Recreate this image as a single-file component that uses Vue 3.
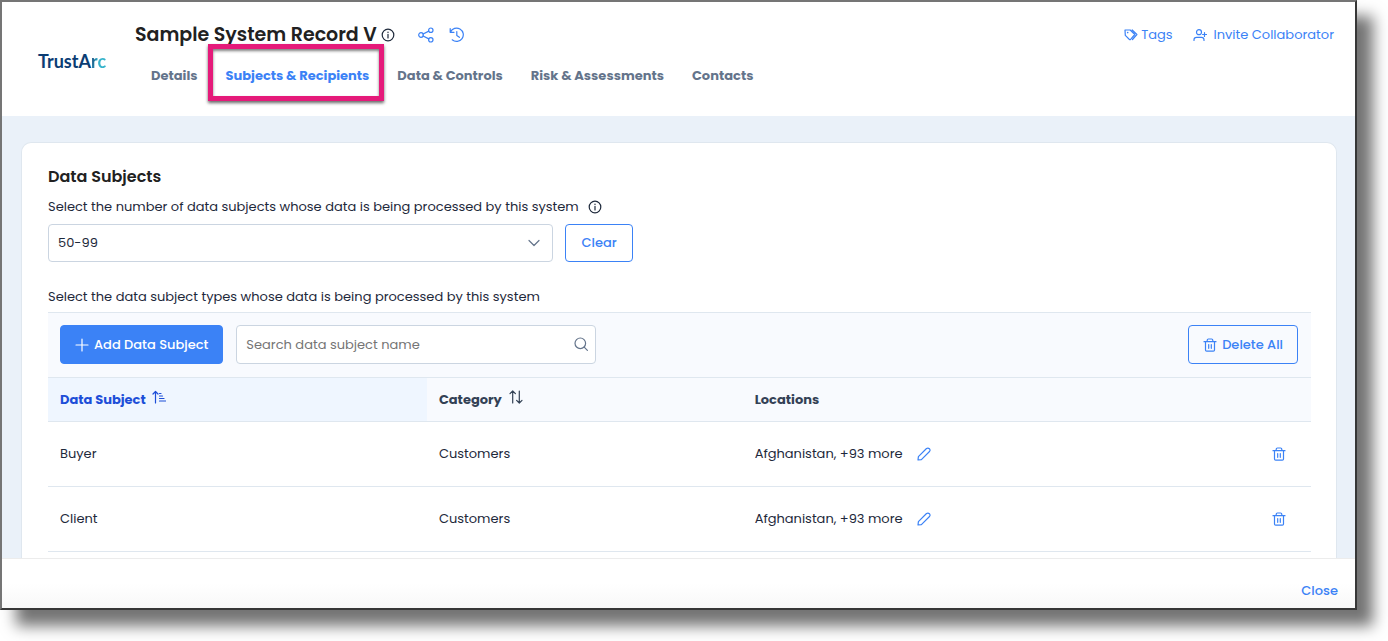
<script setup>
import { ref, computed } from 'vue'

const tabs = ['Details', 'Subjects & Recipients', 'Data & Controls', 'Risk & Assessments', 'Contacts']
const activeTab = ref('Subjects & Recipients')

const ranges = ['', '0-49', '50-99', '100-499', '500+']
const range = ref('50-99')

const query = ref('')
const subjects = ref([
  { name: 'Buyer', category: 'Customers', locations: 'Afghanistan, +93 more' },
  { name: 'Client', category: 'Customers', locations: 'Afghanistan, +93 more' },
])
const visible = computed(() =>
  subjects.value.filter((s) => s.name.toLowerCase().includes(query.value.toLowerCase()))
)
function remove(row) {
  subjects.value = subjects.value.filter((s) => s !== row)
}
</script>

<template>
  <div class="page">
    <div class="window">
      <header class="header">
        <a class="logo" href="#" aria-label="TrustArc">TrustA<span>rc</span></a>
        <div class="heading">
          <div class="title-row">
            <h1>Sample System Record V</h1>
            <button class="icon-btn dark" type="button" aria-label="Record information">
              <svg width="14" height="14" viewBox="0 0 14 14"><circle cx="7" cy="7" r="5.8" /><path d="M7 6.3v3.6M7 4v.5" /></svg>
            </button>
            <button class="icon-btn share" type="button" aria-label="Share">
              <svg width="16" height="16" viewBox="0 0 16 16"><circle cx="3" cy="8" r="2.3" /><circle cx="12.8" cy="3.2" r="2.2" /><circle cx="12.8" cy="12.8" r="2.2" /><path d="M5.1 7L10.8 4.1M5.1 9l5.7 2.9" /></svg>
            </button>
            <button class="icon-btn history" type="button" aria-label="History">
              <svg width="16" height="16" viewBox="0 0 16 16"><path d="M1.200 1.500v3.800h3.800M1.500 5A6.700 6.700 0 1 1 3.200 12.800M7.800 4.500v3.900l2.600 1.900" /></svg>
            </button>
          </div>
          <nav class="tabs">
            <button
              v-for="tab in tabs"
              :key="tab"
              type="button"
              :class="['tab', { active: tab === activeTab }]"
              @click="activeTab = tab"
            >{{ tab }}</button>
          </nav>
        </div>
        <div class="actions">
          <button class="link" type="button">
            <svg width="14" height="14" viewBox="0 0 14 14"><path d="M1 2h5.200l4.600 4.500-4 4.700q-.8.700-1.600 0L1.300 7.400zM8.200 2l4.700 4.500-4.400 5" /><circle class="dot" cx="3.700" cy="4.600" r=".8" /></svg>
            Tags
          </button>
          <button class="link invite" type="button">
            <svg width="14" height="14" viewBox="0 0 14 14"><circle cx="6" cy="4.200" r="2.500" /><path d="M1 12.500v-.7c0-1.700 1-2.500 2.500-2.500h5c1.500 0 2.500.8 2.500 2.500v.7M11.500 4.500v4M9.600 6.500h4" /></svg>
            Invite Collaborator
          </button>
        </div>
      </header>

      <main class="content">
        <section class="card">
          <h2>Data Subjects</h2>
          <div class="label-row">
            <label for="count">Select the number of data subjects whose data is being processed by this system</label>
            <button class="icon-btn dark" type="button" aria-label="About the number of data subjects">
              <svg width="14" height="14" viewBox="0 0 14 14"><circle cx="7" cy="7" r="5.8" /><path d="M7 6.3v3.6M7 4v.5" /></svg>
            </button>
          </div>
          <div class="count-row">
            <div class="select">
              <select id="count" v-model="range">
                <option v-for="r in ranges" :key="r" :value="r">{{ r }}</option>
              </select>
              <svg width="14" height="14" viewBox="0 0 14 14"><path d="M2 4.500l5 5 5-5" /></svg>
            </div>
            <button class="btn outline" type="button" @click="range = ''">Clear</button>
          </div>

          <p class="caption">Select the data subject types whose data is being processed by this system</p>
          <div class="toolbar">
            <button class="btn primary" type="button">
              <svg width="14" height="14" viewBox="0 0 14 14"><path d="M7 1v12M1 7h12" /></svg>
              Add Data Subject
            </button>
            <div class="search">
              <input v-model="query" type="text" aria-label="Search data subject name" placeholder="Search data subject name" />
              <svg width="14" height="14" viewBox="0 0 14 14"><circle cx="6.300" cy="6.300" r="5.300" /><path d="M10.200 10.200l3.200 3.200" /></svg>
            </div>
            <button class="btn outline delete" type="button" @click="subjects = []">
              <svg width="14" height="14" viewBox="0 0 14 14"><path d="M1 3.700h12M2.500 3.700V12q0 1.200 1.200 1.200h6.600q1.200 0 1.200-1.200V3.700M4.200 3.700V2.200q0-1.200 1.200-1.200h3.200q1.200 0 1.200 1.200v1.500M5.700 6.600v3.700M8.300 6.600v3.700" /></svg>
              Delete All
            </button>
          </div>

          <table>
            <thead>
              <tr>
                <th class="sorted" scope="col">
                  Data Subject
                  <svg width="14" height="14" viewBox="0 0 14 14"><path d="M3.500 13V1.500M1 4l2.500-2.500L6 4M7.500 3.500h1.500M7.500 6h3M7.500 8.500h4.500M7.500 11h6" /></svg>
                </th>
                <th class="category" scope="col">
                  Category
                  <svg width="14" height="14" viewBox="0 0 14 14"><path d="M3.700 13V1M1 3.700L3.700 1l2.700 2.700M10.300 1v12M7.600 10.300l2.700 2.700 2.700-2.700" /></svg>
                </th>
                <th class="locations" scope="col">Locations</th>
                <th class="tools" scope="col" aria-label="Actions"></th>
              </tr>
            </thead>
            <tbody>
              <tr v-for="row in visible" :key="row.name">
                <td>{{ row.name }}</td>
                <td>{{ row.category }}</td>
                <td>
                  <div class="location">
                    {{ row.locations }}
                    <button class="icon-btn" type="button" :aria-label="'Edit locations of ' + row.name">
                      <svg width="14" height="14" viewBox="0 0 14 14"><path d="M1 13l.4-3.400 8.100-8.100q1.500-1 2.900.2 1.200 1.400.1 2.800l-8.100 8.100z" /></svg>
                    </button>
                  </div>
                </td>
                <td class="tools">
                  <button class="icon-btn" type="button" :aria-label="'Delete ' + row.name" @click="remove(row)">
                    <svg width="14" height="14" viewBox="0 0 14 14"><path d="M1 3.700h12M2.500 3.700V12q0 1.200 1.200 1.200h6.600q1.200 0 1.200-1.200V3.700M4.200 3.700V2.200q0-1.200 1.200-1.200h3.200q1.200 0 1.200 1.200v1.500M5.700 6.600v3.700M8.300 6.600v3.700" /></svg>
                  </button>
                </td>
              </tr>
            </tbody>
          </table>
        </section>
      </main>

      <footer class="footer">
        <button class="link close" type="button">Close</button>
      </footer>
    </div>
  </div>
</template>

<style>
body {
  background: #fff;
}
</style>

<style scoped>
* {
  box-sizing: border-box;
}
.page {
  height: 100vh;
  padding: 0 31px 31px 0;
  overflow: hidden;
}
.window {
  display: flex;
  flex-direction: column;
  height: 100%;
  border: 2px solid;
  border-color: #757575 #373737 #373737 #757575;
  background: #fff;
  box-shadow: 16px 16px 14px rgba(0, 0, 0, 0.55);
  color: #1e293b;
  font: 13px/20px Poppins, Inter, "Liberation Sans", sans-serif;
}
button,
input,
select {
  font: inherit;
  color: inherit;
}
button {
  display: inline-flex;
  align-items: center;
  padding: 0;
  border: 0;
  background: none;
  cursor: pointer;
  white-space: nowrap;
}
svg {
  flex: none;
  fill: none;
  stroke: currentColor;
  stroke-width: 1.2;
  stroke-linecap: round;
  stroke-linejoin: round;
}
.dot {
  fill: currentColor;
  stroke: none;
}
.header {
  display: flex;
  flex: none;
  height: 114px;
  padding: 19px 21px 0 36px;
}
.logo {
  flex: none;
  width: 97px;
  padding-top: 28px;
  color: #0b3d74;
  font: 700 18px/24px Lato, sans-serif;
  text-decoration: none;
}
.logo span {
  background: linear-gradient(100deg, #0b3d74 10%, #35b3cb 45%);
  background-clip: text;
  color: transparent;
}
.heading {
  flex: 1;
}
.title-row {
  display: flex;
  align-items: center;
  height: 28px;
}
h1 {
  margin: 0 4px 0 0;
  color: #212121;
  font-size: 19px;
  font-weight: 600;
  line-height: 28px;
  white-space: nowrap;
}
.icon-btn {
  color: #3b82f6;
}
.icon-btn.dark {
  color: #1e293b;
}
.icon-btn.share {
  margin-left: 23px;
}
.icon-btn.history {
  margin-left: 15px;
}
.tabs {
  display: flex;
  padding: 4px 0 0 2px;
}
.tab {
  position: relative;
  height: 46px;
  padding: 0 14px;
  color: #64748b;
  font-weight: 700;
}
.tab.active {
  color: #3b82f6;
}
.tab.active::after {
  content: "";
  position: absolute;
  inset: -9px -1px -2px -4px;
  border: 5px solid #e51a7a;
  box-shadow: 0 2px 3px rgba(0, 0, 0, 0.6), inset 0 2px 3px rgba(0, 0, 0, 0.5);
}
.actions {
  display: flex;
  gap: 20px;
  height: 28px;
}
.link {
  gap: 3px;
  color: #3b82f6;
}
.link.invite {
  gap: 7px;
}
.content {
  display: flex;
  flex: 1;
  min-height: 0;
  padding: 26px 18px 0 19px;
  overflow: hidden;
  background: #eaf1f9;
}
.card {
  flex: 1;
  min-width: 0;
  padding: 22px 25px 0 26px;
  border: 1px solid #dfe7ef;
  border-bottom: 0;
  border-radius: 10px 10px 0 0;
  background: #fff;
}
h2 {
  margin: 0;
  color: #212121;
  font-size: 16px;
  font-weight: 600;
  line-height: 24px;
}
.label-row {
  display: flex;
  align-items: center;
  gap: 9px;
  height: 20px;
  margin-top: 8px;
}
.count-row {
  display: flex;
  gap: 12px;
  margin-top: 7px;
}
.select,
.search {
  position: relative;
}
.select {
  width: 40%;
  height: 38px;
}
.select select {
  width: 100%;
  height: 100%;
  padding: 0 32px 0 9px;
  border: 1px solid #cbd5e1;
  border-radius: 4px;
  background: #fff;
  appearance: none;
}
.select svg,
.search svg {
  position: absolute;
  top: 12px;
  right: 12px;
  color: #64748b;
  pointer-events: none;
}
.search svg {
  right: 8px;
}
.btn {
  justify-content: center;
  gap: 5px;
  min-width: 68px;
  height: 39px;
  padding: 0 14px;
  border: 1px solid #3b82f6;
  border-radius: 4px;
  font-weight: 500;
}
.outline {
  height: 38px;
  color: #3b82f6;
}
.primary {
  background: #3b82f6;
  color: #fff;
}
.caption {
  margin: 25px 0 5px;
}
.toolbar {
  display: flex;
  gap: 13px;
  padding: 12px 13px 13px 12px;
  border-top: 1px solid #dfe7ef;
  background: #f8fafe;
}
.search {
  width: 360px;
}
.search input {
  width: 100%;
  height: 39px;
  padding: 0 32px 0 9px;
  border: 1px solid #cbd5e1;
  border-radius: 4px;
  background: #fff;
}
.search input::placeholder {
  color: #757575;
}
.delete {
  height: 39px;
  margin-left: auto;
}
table {
  width: 100%;
  border-collapse: collapse;
  table-layout: fixed;
}
th,
td {
  padding: 0 12px;
  text-align: left;
}
th {
  height: 44px;
  border: solid #dfe7ef;
  border-width: 1px 0;
  background: #f8fafe;
  color: #334155;
  font-weight: 700;
}
th svg {
  margin-left: 4px;
}
.sorted {
  width: 30%;
  background: #eff6ff;
  color: #1d4ed8;
}
.category {
  width: 25%;
}
td {
  height: 65px;
  border-bottom: 1px solid #dfe7ef;
}
.tools {
  width: 64px;
  padding-right: 25px;
  text-align: right;
}
td button {
  vertical-align: middle;
}
.location {
  display: flex;
  align-items: center;
  gap: 14px;
}
.footer {
  display: flex;
  flex: none;
  justify-content: flex-end;
  align-items: center;
  height: 50px;
  padding: 14px 17px 0;
  border-top: 1px solid #ececec;
  background: linear-gradient(#fff 50%, #f8f8f8);
}
.close {
  font-weight: 500;
}
</style>
